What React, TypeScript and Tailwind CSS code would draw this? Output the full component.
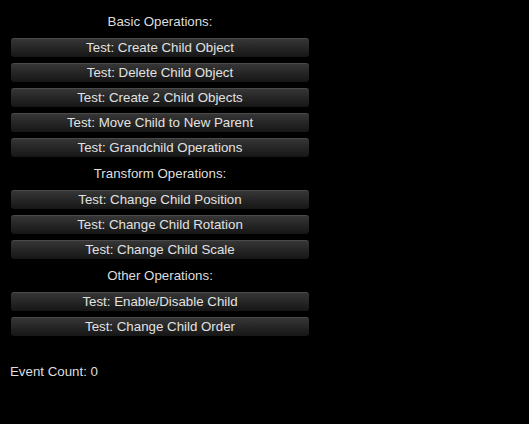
const sections: { title: string; tests: string[] }[] = [
  {
    title: 'Basic Operations:',
    tests: [
      'Test: Create Child Object',
      'Test: Delete Child Object',
      'Test: Create 2 Child Objects',
      'Test: Move Child to New Parent',
      'Test: Grandchild Operations',
    ],
  },
  {
    title: 'Transform Operations:',
    tests: ['Test: Change Child Position', 'Test: Change Child Rotation', 'Test: Change Child Scale'],
  },
  {
    title: 'Other Operations:',
    tests: ['Test: Enable/Disable Child', 'Test: Change Child Order'],
  },
];

export default function App() {
  return (
    <div className="h-[424px] w-[529px] bg-black pl-[11px] pt-[11px] font-['Liberation_Sans',Arial,sans-serif] text-[13.3px] text-[#dedede]">
      <div className="flex w-[298px] flex-col gap-[6px]">
        {sections.map((section) => (
          <div key={section.title} className="flex flex-col gap-[6px]">
            <div className="flex h-[21px] items-center justify-center">{section.title}</div>
            {section.tests.map((test) => (
              <button
                key={test}
                type="button"
                className="flex h-[19px] items-center justify-center rounded-[3px] border-t border-[#4a4a4a] bg-gradient-to-b from-[#363636] to-[#161616] pb-[1px] leading-none text-[#e2e2e2]"
              >
                {test}
              </button>
            ))}
          </div>
        ))}
      </div>
      <p className="mt-[29px] -ml-[1px] leading-none">Event Count: 0</p>
    </div>
  );
}
